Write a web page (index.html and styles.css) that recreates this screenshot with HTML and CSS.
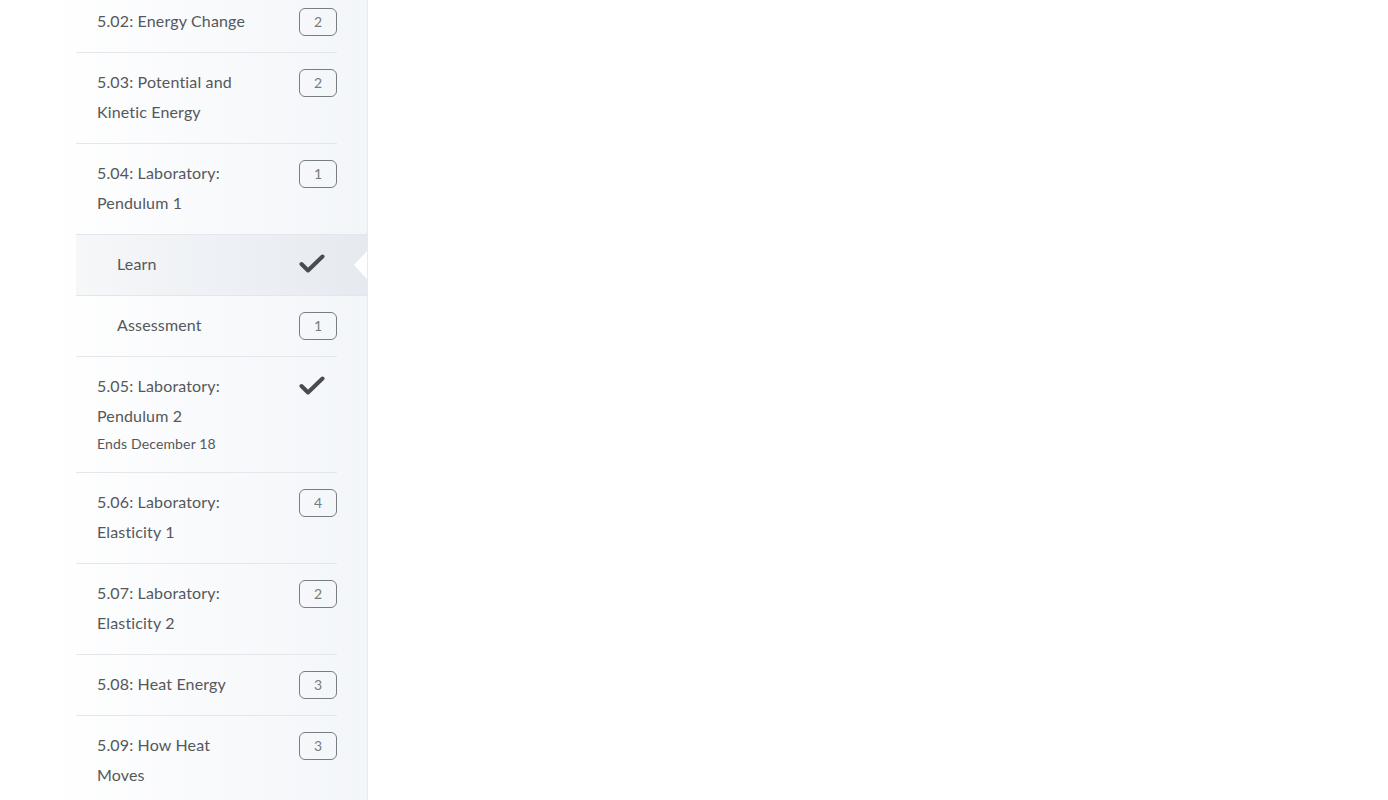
FILE: index.html
```html
<!DOCTYPE html>
<html lang="en">
<head>
<meta charset="utf-8">
<title>Unit 5</title>
<link rel="stylesheet" href="styles.css">
</head>
<body>
<div class="page">
  <nav class="sidebar">
    <ul class="toc">
      <li class="item">
        <span class="title">5.02: Energy Change</span>
        <span class="badge">2</span>
      </li>
      <li class="item">
        <span class="title">5.03: Potential and Kinetic Energy</span>
        <span class="badge">2</span>
      </li>
      <li class="item">
        <span class="title">5.04: Laboratory: Pendulum 1</span>
        <span class="badge">1</span>
      </li>
      <li class="item sub active">
        <span class="title">Learn</span>
        <svg class="check" width="26" height="20" viewBox="0 0 26 20"><path d="M2.5 10 L9 16.5 L23.5 2.5" fill="none" stroke="#494c4e" stroke-width="4" stroke-linecap="round" stroke-linejoin="round"/></svg>
      </li>
      <li class="item sub">
        <span class="title">Assessment</span>
        <span class="badge">1</span>
      </li>
      <li class="item">
        <span class="title">5.05: Laboratory: Pendulum 2<span class="meta">Ends December 18</span></span>
        <svg class="check" width="26" height="20" viewBox="0 0 26 20"><path d="M2.5 10 L9 16.5 L23.5 2.5" fill="none" stroke="#494c4e" stroke-width="4" stroke-linecap="round" stroke-linejoin="round"/></svg>
      </li>
      <li class="item">
        <span class="title">5.06: Laboratory: Elasticity 1</span>
        <span class="badge">4</span>
      </li>
      <li class="item">
        <span class="title">5.07: Laboratory: Elasticity 2</span>
        <span class="badge">2</span>
      </li>
      <li class="item">
        <span class="title">5.08: Heat Energy</span>
        <span class="badge">3</span>
      </li>
      <li class="item">
        <span class="title">5.09: How Heat Moves</span>
        <span class="badge">3</span>
      </li>
    </ul>
  </nav>
  <main class="content"></main>
</div>
</body>
</html>
```
FILE: styles.css
```css
html, body {
  margin: 0;
  padding: 0;
  background: #ffffff;
}
body {
  font-family: Lato, "Liberation Sans", sans-serif;
  color: #54585b;
  overflow: hidden;
  height: 800px;
}
.page {
  display: flex;
  height: 800px;
}
.sidebar {
  width: 367px;
  flex: 0 0 367px;
  border-right: 1px solid #e6eaf0;
  background: linear-gradient(to right, #ffffff 0px, #ffffff 48px, #f9fafc 200px, #f3f6f9 367px);
  overflow: hidden;
}
.toc {
  list-style: none;
  margin: -8px 30px 0 76px;
  padding: 0;
}
.item {
  display: flex;
  justify-content: space-between;
  align-items: flex-start;
  padding: 14px 0 16px 21px;
  border-bottom: 1px solid #e3e6ea;
  font-size: 16px;
  line-height: 30px;
  letter-spacing: 0.15px;
  position: relative;
}
.title {
  max-width: 160px;
  display: flex;
  flex-direction: column;
}
.item.sub {
  padding-left: 41px;
}
.item.sub .title {
  max-width: 180px;
}
.item.active {
  margin-right: -30px;
  padding-right: 30px;
  background: linear-gradient(to right, #f6f7f9 0%, #eef1f5 45%, #e6eaf0 100%);
  border-top: 1px solid #e3e6ea;
  margin-top: -1px;
}
.item.active::after {
  content: "";
  position: absolute;
  right: 0;
  top: 50%;
  margin-top: -14px;
  border-style: solid;
  border-width: 14px 13px 14px 0;
  border-color: transparent #ffffff transparent transparent;
}
.meta {
  font-size: 14px;
  line-height: 25px;
}
.badge {
  box-sizing: border-box;
  width: 38px;
  height: 28px;
  margin-top: 2px;
  border: 1px solid #787d82;
  border-radius: 6px;
  font-size: 14px;
  line-height: 26px;
  text-align: center;
  color: #767b7f;
  letter-spacing: 0;
  flex: 0 0 auto;
}
.check {
  flex: 0 0 auto;
  margin: 5px 12px 0 0;
  display: block;
}
.content {
  flex: 1;
}
```
